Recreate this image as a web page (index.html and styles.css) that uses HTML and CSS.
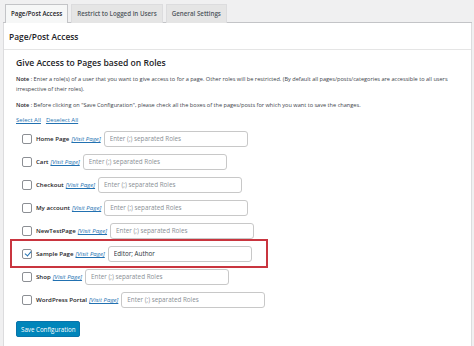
FILE: index.html
```html
<!DOCTYPE html>
<html lang="en">
<head>
    <meta charset="UTF-8">
    <meta name="viewport" content="width=device-width, initial-scale=1.0">
    <title>Page/Post Access</title>
    <link rel="stylesheet" href="styles.css">
</head>
<body>
    <div class="wrap">
        <nav class="tabs">
            <a href="#" class="tab active">Page/Post Access</a>
            <a href="#" class="tab">Restrict to Logged in Users</a>
            <a href="#" class="tab">General Settings</a>
        </nav>

        <div class="panel">
            <h2 class="panel-title">Page/Post Access</h2>

            <div class="inside">
                <h3>Give Access to Pages based on Roles</h3>
                <p class="note"><b>Note</b> : Enter a role(s) of a user that you want to give access to for a page. Other roles will be restricted. (By default all pages/posts/categories are accessible to all users irrespective of their roles).</p>
                <p class="note"><b>Note</b> : Before clicking on "Save Configuration", please check all the boxes of the pages/posts for which you want to save the changes.</p>

                <div class="select-links">
                    <a href="#">Select All</a>
                    <a href="#">Deselect All</a>
                </div>

                <ul class="page-list">
                    <li class="page-row">
                        <input type="checkbox" class="check">
                        <span class="page-name">Home Page</span>
                        <a href="#" class="visit">[Visit Page]</a>
                        <input type="text" class="roles" placeholder="Enter (;) separated Roles">
                    </li>
                    <li class="page-row">
                        <input type="checkbox" class="check">
                        <span class="page-name">Cart</span>
                        <a href="#" class="visit">[Visit Page]</a>
                        <input type="text" class="roles" placeholder="Enter (;) separated Roles">
                    </li>
                    <li class="page-row">
                        <input type="checkbox" class="check">
                        <span class="page-name">Checkout</span>
                        <a href="#" class="visit">[Visit Page]</a>
                        <input type="text" class="roles" placeholder="Enter (;) separated Roles">
                    </li>
                    <li class="page-row">
                        <input type="checkbox" class="check">
                        <span class="page-name">My account</span>
                        <a href="#" class="visit">[Visit Page]</a>
                        <input type="text" class="roles" placeholder="Enter (;) separated Roles">
                    </li>
                    <li class="page-row">
                        <input type="checkbox" class="check">
                        <span class="page-name">NewTestPage</span>
                        <a href="#" class="visit">[Visit Page]</a>
                        <input type="text" class="roles" placeholder="Enter (;) separated Roles">
                    </li>
                    <li class="page-row highlight">
                        <input type="checkbox" class="check" checked>
                        <span class="page-name">Sample Page</span>
                        <a href="#" class="visit">[Visit Page]</a>
                        <input type="text" class="roles" value="Editor; Author">
                    </li>
                    <li class="page-row">
                        <input type="checkbox" class="check">
                        <span class="page-name">Shop</span>
                        <a href="#" class="visit">[Visit Page]</a>
                        <input type="text" class="roles" placeholder="Enter (;) separated Roles">
                    </li>
                    <li class="page-row">
                        <input type="checkbox" class="check">
                        <span class="page-name">WordPress Portal</span>
                        <a href="#" class="visit">[Visit Page]</a>
                        <input type="text" class="roles" placeholder="Enter (;) separated Roles">
                    </li>
                </ul>

                <button class="btn-save">Save Configuration</button>
            </div>
        </div>
    </div>
</body>
</html>
```

FILE: styles.css
```css
* {
    margin: 0;
    padding: 0;
    box-sizing: border-box;
}

body {
    font-family: 'Open Sans', 'Noto Sans', sans-serif;
    background: #f0f0f1;
    color: #3c434a;
}

.wrap {
    padding: 4px 2px 0 3px;
}

.tabs {
    display: flex;
    gap: 3px;
    padding-left: 2px;
    border-bottom: 1px solid #c3c4c7;
}

.tab {
    display: block;
    height: 19px;
    line-height: 18px;
    padding: 0 5px;
    margin-bottom: -1px;
    font-size: 6.2px;
    font-weight: 600;
    color: #50575e;
    text-decoration: none;
    background: #e5e5e5;
    border: 1px solid #dcdcde;
    border-bottom: none;
}

.tab.active {
    background: #f6f7f7;
    color: #1d2327;
    border-color: #c3c4c7;
}

.panel {
    background: #fff;
    border: 1px solid #dcdcde;
    border-top: none;
    min-height: 330px;
}

.panel-title {
    font-size: 8.4px;
    font-weight: 600;
    color: #1d2327;
    line-height: 12px;
    padding: 8px 5px 6px;
    border-bottom: 1px solid #e5e5e5;
}

.inside {
    padding: 7px 12px 0 12px;
}

.inside h3 {
    font-size: 8.6px;
    font-weight: 600;
    color: #1d2327;
    line-height: 12px;
    margin-bottom: 5px;
}

.note {
    font-size: 5.6px;
    line-height: 10px;
    margin-bottom: 6px;
}

.note b {
    font-weight: 600;
    color: #1d2327;
}

.select-links {
    display: flex;
    gap: 5px;
    font-size: 6px;
    line-height: 10px;
    margin-top: -1px;
}

.select-links a,
.visit {
    color: #2271b1;
}

.page-list {
    list-style: none;
    margin-top: 2px;
}

.page-row {
    display: flex;
    align-items: center;
    height: 23px;
    padding-left: 6px;
    font-size: 6.1px;
}

.page-row.highlight {
    width: fit-content;
    height: 29px;
    margin: -3px 0 -3px -6px;
    padding: 0 14px 0 10px;
    border: 2px solid #c9353f;
}

.check {
    appearance: none;
    width: 10px;
    height: 10px;
    border: 1px solid #8c8f94;
    border-radius: 2px;
    background: #fff;
    margin-right: 4px;
    position: relative;
}

.check:checked::after {
    content: "";
    position: absolute;
    left: 2.5px;
    top: 0.5px;
    width: 3px;
    height: 5px;
    border: solid #2271b1;
    border-width: 0 1.2px 1.2px 0;
    transform: rotate(40deg);
}

.page-name {
    font-weight: 600;
    color: #1d2327;
}

.visit {
    font-style: italic;
    margin-left: 2px;
    margin-right: 3px;
}

.roles {
    width: 144px;
    height: 16px;
    border: 1px solid #c8c8c8;
    border-radius: 3px;
    padding: 0 5px;
    font-family: inherit;
    font-size: 6.3px;
    color: #2c3338;
}

.roles::placeholder {
    color: #8a8f95;
}

.btn-save {
    margin-top: 10px;
    height: 16px;
    padding: 0 4px;
    border: 1px solid #0a73aa;
    border-radius: 2px;
    background: #0085ba;
    color: #fff;
    font-family: inherit;
    font-size: 6.2px;
}
```
